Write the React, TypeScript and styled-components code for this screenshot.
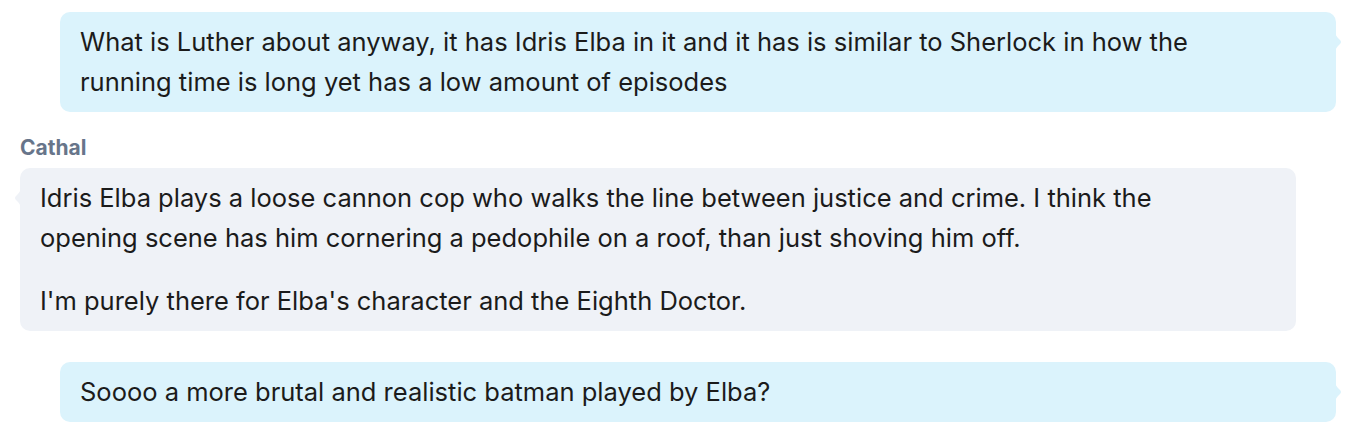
import React from "react";
import { createGlobalStyle, styled } from "styled-components";

const GlobalStyle = createGlobalStyle`
	html, body {
		margin: 0;
		padding: 0;
		background: #ffffff;
	}
	body {
		font-family: Inter, "Noto Sans", sans-serif;
		color: #1b1b1b;
		-webkit-font-smoothing: antialiased;
	}
`;

type Side = "out" | "in";

interface Message {
	id: number;
	side: Side;
	author?: string;
	paragraphs: string[];
}

const messages: Message[] = [
	{
		id: 1,
		side: "out",
		paragraphs: [
			"What is Luther about anyway, it has Idris Elba in it and it has is similar to Sherlock in how the running time is long yet has a low amount of episodes",
		],
	},
	{
		id: 2,
		side: "in",
		author: "Cathal",
		paragraphs: [
			"Idris Elba plays a loose cannon cop who walks the line between justice and crime. I think the opening scene has him cornering a pedophile on a roof, than just shoving him off.",
			"I'm purely there for Elba's character and the Eighth Doctor.",
		],
	},
	{
		id: 3,
		side: "out",
		paragraphs: ["Soooo a more brutal and realistic batman played by Elba?"],
	},
];

const Tail: React.FC<{ side: Side }> = ({ side }) => (
	<TailSvg $side={side} width="10" height="32" viewBox="0 0 10 32">
		<path d="M0 0 C0 7 2 10 5.5 13.5 Q8.5 16 5.5 18.5 C2 22 0 25 0 32 Z" />
	</TailSvg>
);

const App: React.FC = () => {
	return (
		<>
			<GlobalStyle />
			<Thread>
				{messages.map((m) => (
					<Group key={m.id} $side={m.side}>
						{m.author && <Author>{m.author}</Author>}
						<Bubble $side={m.side}>
							<Tail side={m.side} />
							{m.paragraphs.map((p, i) => (
								<Text key={i}>{p}</Text>
							))}
						</Bubble>
					</Group>
				))}
			</Thread>
		</>
	);
};

export default App;

const Thread = styled.div`
	display: flex;
	flex-direction: column;
	gap: 31px;
	padding: 12px 24px 0 20px;
`;

const Group = styled.div<{ $side: Side }>`
	display: flex;
	flex-direction: column;
	padding-left: ${(p) => (p.$side === "out" ? "40px" : "0")};
	padding-right: ${(p) => (p.$side === "in" ? "40px" : "0")};
`;

const Author = styled.div`
	font-size: 21px;
	font-weight: 700;
	color: #67758a;
	line-height: 24px;
	margin-top: -7px;
	margin-bottom: 8px;
`;

const Bubble = styled.div<{ $side: Side }>`
	position: relative;
	padding: 10px 20px;
	border-radius: 10px;
	background: ${(p) => (p.$side === "out" ? "#dbf3fc" : "#eff2f7")};
	color: ${(p) => (p.$side === "out" ? "#dbf3fc" : "#eff2f7")};
`;

const TailSvg = styled.svg<{ $side: Side }>`
	position: absolute;
	top: 14px;
	fill: currentColor;
	${(p) =>
		p.$side === "out"
			? "right: -8px;"
			: "left: -8px; transform: scaleX(-1);"}
`;

const Text = styled.p`
	margin: 0;
	max-width: 1125px;
	font-size: 25.5px;
	line-height: 40px;
	color: #1b1b1b;

	& + & {
		margin-top: 23px;
	}
`;
